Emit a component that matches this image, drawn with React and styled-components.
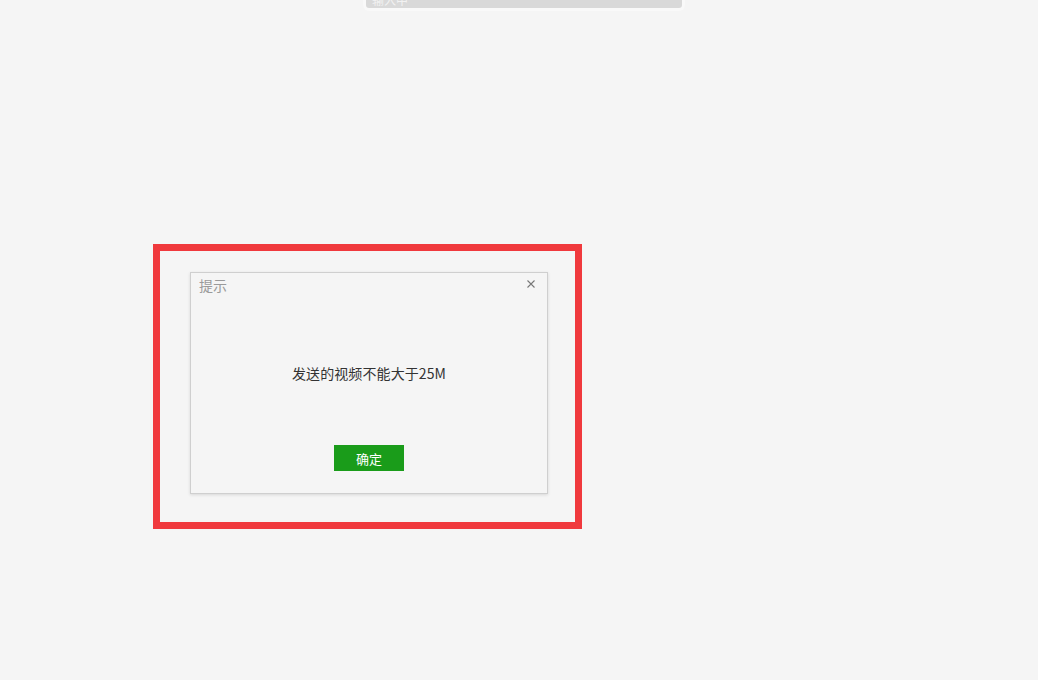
import React from "react";
import { styled, createGlobalStyle } from "styled-components";

const GlobalStyle = createGlobalStyle`
  *, *::before, *::after {
    box-sizing: border-box;
  }
  html, body {
    margin: 0;
    padding: 0;
    background: #f5f5f5;
    font-family: "Noto Sans CJK SC", "Microsoft YaHei", sans-serif;
  }
`;

const App = () => {
  return (
    <>
      <GlobalStyle />
      <Page>
        <TopBar>
          <TopBarText>输入中</TopBarText>
        </TopBar>
        <Highlight>
          <Dialog>
            <Header>
              <Title>提示</Title>
              <Close aria-label="close">
                <svg width="8" height="8" viewBox="0 0 8 8">
                  <path d="M0.5 0.5 L7.5 7.5 M7.5 0.5 L0.5 7.5" stroke="#777" strokeWidth="1.1" />
                </svg>
              </Close>
            </Header>
            <Body>发送的视频不能大于25M</Body>
            <Footer>
              <Button>确定</Button>
            </Footer>
          </Dialog>
        </Highlight>
      </Page>
    </>
  );
};

const Page = styled.div`
  width: 1038px;
  height: 680px;
  overflow: hidden;
  display: flex;
  flex-direction: column;
`;

const TopBar = styled.div`
  margin-left: 366px;
  width: 316px;
  height: 8px;
  background: #d9d9d9;
  border-radius: 0 0 3px 3px;
  box-shadow: 0 0 0 3px #f9f9f9;
  position: relative;
  overflow: hidden;
`;

const TopBarText = styled.span`
  position: absolute;
  left: 6px;
  top: -9px;
  font-size: 12px;
  color: #f2f2f2;
`;

const Highlight = styled.div`
  margin-top: 236px;
  margin-left: 153px;
  width: 429px;
  height: 285px;
  border: 7px solid #f0393d;
  padding: 21px 0 0 30px;
`;

const Dialog = styled.div`
  width: 358px;
  height: 222px;
  border: 1px solid #cfcfcf;
  background: #f5f5f5;
  box-shadow: 0 1px 3px rgba(0, 0, 0, 0.12);
  display: flex;
  flex-direction: column;
`;

const Header = styled.div`
  display: flex;
  justify-content: space-between;
  align-items: flex-start;
  padding: 2px 12px 0 8px;
  height: 24px;
`;

const Title = styled.div`
  font-size: 14px;
  color: #9a9a9a;
  line-height: 20px;
`;

const Close = styled.div`
  padding-top: 5px;
  line-height: 0;
`;

const Body = styled.div`
  text-align: center;
  font-size: 14px;
  letter-spacing: 0.1px;
  color: #333;
  margin-top: 63px;
  line-height: 26px;
`;

const Footer = styled.div`
  display: flex;
  justify-content: center;
  margin-top: 59px;
`;

const Button = styled.button`
  width: 70px;
  height: 26px;
  border: none;
  border-radius: 0;
  background: #1a9c1a;
  color: #fff;
  font-family: inherit;
  font-size: 13px;
  padding: 0;
  cursor: pointer;
`;

export default App;
